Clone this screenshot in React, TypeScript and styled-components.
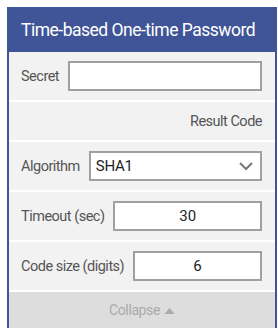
import React, { useState } from "react";
import styled, { createGlobalStyle } from "styled-components";

const GlobalStyle = createGlobalStyle`
  html, body {
    margin: 0;
    padding: 0;
    background: #ffffff;
    font-family: Roboto, "Liberation Sans", Arial, sans-serif;
  }
  * {
    box-sizing: border-box;
  }
`;

const Page = styled.div`
  padding: 7px 1px 0 7px;
  height: 328px;
  overflow: hidden;
`;

const Card = styled.div`
  width: 270px;
  border: 2px solid #3f5597;
  border-top: none;
  background: #f2f2f2;
`;

const Header = styled.div`
  height: 45px;
  margin: 0 -2px;
  padding: 0 14px;
  display: flex;
  align-items: center;
  background: #3f5597;
  color: #ffffff;
  font-size: 17.5px;
  letter-spacing: -0.5px;
  white-space: nowrap;
`;

const Row = styled.div<{ $right?: boolean; $height?: number }>`
  display: flex;
  align-items: center;
  justify-content: ${(p) => (p.$right ? "flex-end" : "flex-start")};
  gap: 9px;
  height: ${(p) => p.$height ?? 50}px;
  padding: 0 13px 0 12px;
  border-bottom: 2px solid #ffffff;
`;

const Label = styled.span`
  font-size: 14.5px;
  letter-spacing: -0.5px;
  color: #555555;
  white-space: nowrap;
`;

const TextInput = styled.input<{ $center?: boolean }>`
  flex: 1;
  min-width: 0;
  height: 30px;
  margin: 0;
  padding: 0 6px;
  border: 2px solid #a0a0a0;
  border-radius: 0;
  background: #ffffff;
  outline: none;
  font-family: inherit;
  font-size: 15px;
  color: #1e1e1e;
  text-align: ${(p) => (p.$center ? "center" : "left")};
`;

const SelectBox = styled.div`
  flex: 1;
  height: 30px;
  display: flex;
  align-items: center;
  justify-content: space-between;
  padding: 0 6px 0 5px;
  border: 2px solid #a0a0a0;
  background: #ffffff;
  font-size: 15px;
  letter-spacing: -0.3px;
  color: #1e1e1e;
`;

const Chevron = styled.svg`
  width: 14px;
  height: 10px;
  margin-right: 1px;
`;

const Footer = styled.div`
  height: 40px;
  display: flex;
  justify-content: center;
  padding-top: 10px;
  background: #dddddd;
  color: #aaaaaa;
  font-size: 14px;
  letter-spacing: -0.4px;
  gap: 4px;
`;

const Arrow = styled.svg`
  width: 11px;
  height: 8px;
  margin-top: 5px;
`;

export default function App() {
  const [secret, setSecret] = useState("");
  const [timeout, setTimeoutValue] = useState("30");
  const [digits, setDigits] = useState("6");

  return (
    <Page>
      <GlobalStyle />
      <Card>
        <Header>Time-based One-time Password</Header>
        <Row $height={50}>
          <Label>Secret</Label>
          <TextInput value={secret} onChange={(e) => setSecret(e.target.value)} />
        </Row>
        <Row $right $height={40}>
          <Label>Result Code</Label>
        </Row>
        <Row>
          <Label>Algorithm</Label>
          <SelectBox>
            <span>SHA1</span>
            <Chevron viewBox="0 0 14 10">
              <path d="M1 2 L7 8 L13 2" fill="none" stroke="#777777" strokeWidth="2" />
            </Chevron>
          </SelectBox>
        </Row>
        <Row>
          <Label>Timeout (sec)</Label>
          <TextInput $center value={timeout} onChange={(e) => setTimeoutValue(e.target.value)} />
        </Row>
        <Row>
          <Label>Code size (digits)</Label>
          <TextInput $center value={digits} onChange={(e) => setDigits(e.target.value)} />
        </Row>
        <Footer>
          <span>Collapse</span>
          <Arrow viewBox="0 0 11 8">
            <path d="M0.5 7 L5.5 1 L10.5 7 Z" fill="#aaaaaa" />
          </Arrow>
        </Footer>
      </Card>
    </Page>
  );
}
